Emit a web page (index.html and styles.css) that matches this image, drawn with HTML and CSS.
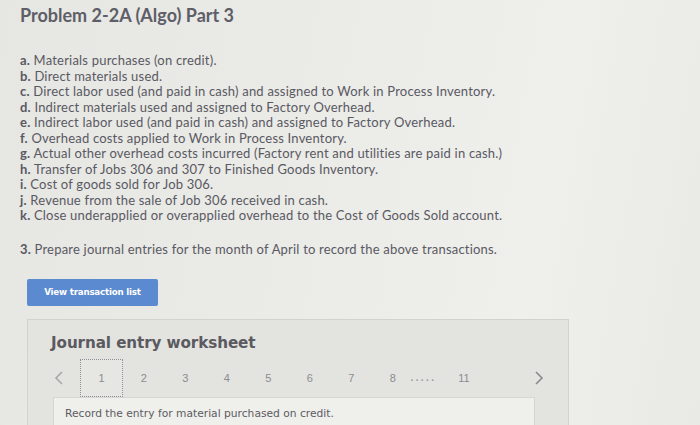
FILE: index.html
```html
<!DOCTYPE html>
<html>
<head>
<meta charset="utf-8">
<link rel="stylesheet" href="styles.css">
</head>
<body>
<div class="page">
  <h1 class="title">Problem 2-2A (Algo) Part 3</h1>
  <ul class="items">
    <li><b>a.</b> Materials purchases (on credit).</li>
    <li><b>b.</b> Direct materials used.</li>
    <li><b>c.</b> Direct labor used (and paid in cash) and assigned to Work in Process Inventory.</li>
    <li><b>d.</b> Indirect materials used and assigned to Factory Overhead.</li>
    <li><b>e.</b> Indirect labor used (and paid in cash) and assigned to Factory Overhead.</li>
    <li><b>f.</b> Overhead costs applied to Work in Process Inventory.</li>
    <li><b>g.</b> Actual other overhead costs incurred (Factory rent and utilities are paid in cash.)</li>
    <li><b>h.</b> Transfer of Jobs 306 and 307 to Finished Goods Inventory.</li>
    <li><b>i.</b> Cost of goods sold for Job 306.</li>
    <li><b>j.</b> Revenue from the sale of Job 306 received in cash.</li>
    <li><b>k.</b> Close underapplied or overapplied overhead to the Cost of Goods Sold account.</li>
  </ul>
  <p class="task"><b>3.</b> Prepare journal entries for the month of April to record the above transactions.</p>
  <button class="btn">View transaction list</button>
  <section class="panel">
    <h2 class="ws-title">Journal entry worksheet</h2>
    <nav class="pager">
      <span class="arrow">
        <svg width="10" height="16" viewBox="0 0 10 16"><path d="M8 2 L2 8 L8 14" fill="none" stroke="#a8a8ac" stroke-width="1.6"/></svg>
      </span>
      <span class="pg current">1</span>
      <span class="pg">2</span>
      <span class="pg">3</span>
      <span class="pg">4</span>
      <span class="pg">5</span>
      <span class="pg">6</span>
      <span class="pg">7</span>
      <span class="pg">8</span>
      <span class="dots">.....</span>
      <span class="pg last">11</span>
      <span class="arrow right">
        <svg width="10" height="16" viewBox="0 0 10 16"><path d="M2 2 L8 8 L2 14" fill="none" stroke="#8a8a90" stroke-width="1.6"/></svg>
      </span>
    </nav>
    <div class="entry">Record the entry for material purchased on credit.</div>
  </section>
</div>
</body>
</html>
```

FILE: styles.css
```css
html, body {
  margin: 0;
  padding: 0;
}
body {
  width: 700px;
  height: 425px;
  overflow: hidden;
  background: linear-gradient(100deg, #e6e6e2 0%, #ebebe7 45%, #efefec 75%, #e9e9e5 100%);
  font-family: Lato, "Open Sans", sans-serif;
  color: #595963;
}
.page {
  padding: 3px 0 0 20px;
}
.title {
  margin: 0;
  font-family: Lato, sans-serif;
  font-weight: 700;
  font-size: 18px;
  line-height: 24px;
  color: #5e5e68;
}
.items {
  list-style: none;
  margin: 26px 0 0 0;
  padding: 0;
  font-size: 13px;
  letter-spacing: 0.2px;
  line-height: 15.5px;
}
.items b, .task b {
  font-weight: 700;
}
.task {
  margin: 17px 0 0 0;
  font-size: 13px;
  letter-spacing: 0.2px;
  line-height: 16px;
}
.btn {
  display: block;
  margin: 22px 0 0 7px;
  width: 131px;
  height: 27px;
  border: none;
  border-radius: 2px;
  background: #5b8ad0;
  color: #fff;
  font-family: "DejaVu Sans", sans-serif;
  font-weight: 700;
  font-size: 8.7px;
  letter-spacing: -0.2px;
  padding: 0;
}
.panel {
  margin: 13px 0 0 7px;
  width: 542px;
  height: 120px;
  box-sizing: border-box;
  border: 1px solid #d2d2cf;
  border-bottom: none;
  background: #e3e3e0;
  padding: 0 0 0 25px;
}
.ws-title {
  margin: 13px 0 0 -2px;
  font-family: "DejaVu Sans", sans-serif;
  font-weight: 700;
  font-size: 15.2px;
  line-height: 20px;
  color: #5a5a60;
  letter-spacing: -0.1px;
}
.pager {
  display: flex;
  align-items: center;
  height: 38px;
  margin-top: 6px;
  font-family: "Liberation Sans", sans-serif;
  font-size: 11px;
  color: #8c8c92;
}
.arrow {
  display: flex;
  width: 26px;
  flex: none;
  margin-left: 1px;
}
.arrow.right {
  margin-left: 52px;
}
.pg {
  width: 41.5px;
  flex: none;
  text-align: center;
}
.pg.current {
  width: 43px;
  height: 38px;
  box-sizing: border-box;
  border: 1.5px dotted #8f8f96;
  display: flex;
  align-items: center;
  justify-content: center;
  background: #e6e6e3;
}
.pg.last {
  width: 35px;
}
.dots {
  width: 36px;
  flex: none;
  margin-left: -3px;
  text-align: left;
  letter-spacing: 2.4px;
  font-size: 10px;
  font-weight: 700;
  color: #9a9aa0;
}
.entry {
  width: 482px;
  height: 40px;
  box-sizing: border-box;
  background: #efefec;
  border: 1px solid #d6d6d2;
  border-bottom: none;
  padding: 9px 0 0 11px;
  font-family: "DejaVu Sans", sans-serif;
  font-size: 10.7px;
  color: #5c5c62;
}
```
